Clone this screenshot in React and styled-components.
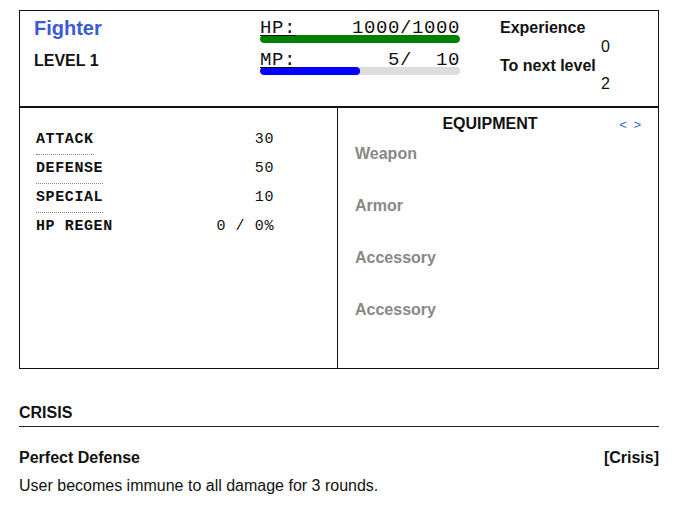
import React from 'react';
import styled, { createGlobalStyle } from 'styled-components';

const GlobalStyle = createGlobalStyle`
	body {
		margin: 0;
		font-family: "Liberation Sans", Arial, sans-serif;
		color: #111;
		background: #fff;
	}
`;

const Page = styled.div`
	width: 640px;
	padding: 10px 0 0 19px;
`;

const Card = styled.div`
	border: 1px solid #111;
`;

const Header = styled.header`
	display: grid;
	grid-template-columns: 240px 200px 150px;
	height: 95px;
	border-bottom: 2px solid #111;
`;

const NameBlock = styled.div`
	padding: 5px 0 0 14px;
`;

const Name = styled.div`
	color: #3a5bd1;
	font-size: 20px;
	font-weight: 700;
	line-height: 24px;
`;

const Level = styled.div`
	margin-top: 11px;
	font-size: 16px;
	font-weight: 700;
	line-height: 20px;
`;

const Gauges = styled.div`
	display: flex;
	flex-direction: column;
	gap: 10px;
	padding-top: 10px;
`;

const GaugeRow = styled.div`
	display: flex;
	justify-content: space-between;
	font-family: "Liberation Mono", "Courier New", monospace;
	font-size: 19px;
	letter-spacing: 0.6px;
	line-height: 14px;
	white-space: pre;
`;

const GaugeLabel = styled.span`
	text-decoration: underline;
	text-underline-offset: 2px;
`;

const Track = styled.div`
	height: 8px;
	border-radius: 4px;
	background: #dcdcdc;
	overflow: hidden;
`;

const Fill = styled.div`
	height: 100%;
	border-radius: 4px;
	background: ${(p) => p.$color};
`;

const ExpBlock = styled.div`
	padding: 7px 0 0 40px;
	font-size: 16px;
	line-height: 19px;
`;

const ExpLabel = styled.div`
	font-weight: 700;
	white-space: nowrap;
`;

const ExpValue = styled.div`
	text-align: right;
	margin-top: ${(p) => p.$pull || 0}px;
`;

const Body = styled.div`
	display: grid;
	grid-template-columns: 318px 1fr;
	height: 260px;
`;

const StatsPanel = styled.div`
	border-right: 1px solid #111;
	padding: 23px 0 0 16px;
`;

const StatRow = styled.div`
	display: flex;
	justify-content: space-between;
	align-items: flex-start;
	width: 238px;
	margin-bottom: 5px;
	font-family: "Liberation Mono", "Courier New", monospace;
	font-size: 15px;
	letter-spacing: 0.6px;
	line-height: 18px;
	white-space: pre;
`;

const StatLabel = styled.span`
	font-weight: 700;
	padding-bottom: 5px;
	border-bottom: 1px dotted ${(p) => (p.$last ? 'transparent' : '#888')};
`;

const EquipPanel = styled.div`
	padding: 6px 16px 0 17px;
`;

const EquipHead = styled.div`
	display: grid;
	grid-template-columns: 1fr auto 1fr;
	align-items: center;
	margin-left: -17px;
	margin-bottom: 10px;
`;

const EquipTitle = styled.div`
	grid-column: 2;
	font-size: 16px;
	font-weight: 700;
	line-height: 20px;
`;

const Nav = styled.div`
	justify-self: end;
	color: #3366e6;
	font-size: 13px;
	letter-spacing: 1px;
	word-spacing: 1px;
`;

const Slot = styled.div`
	color: #888;
	font-size: 16px;
	font-weight: 700;
	line-height: 20px;
	margin-bottom: 32px;
`;

const Crisis = styled.section`
	margin-top: 34px;
	font-size: 16px;
	line-height: 20px;
`;

const CrisisTitle = styled.h3`
	margin: 0;
	padding-bottom: 3px;
	font-size: 16px;
	font-weight: 700;
	border-bottom: 1px solid #222;
`;

const AbilityHead = styled.div`
	display: flex;
	justify-content: space-between;
	margin-top: 21px;
	font-weight: 700;
`;

const AbilityText = styled.div`
	margin-top: 8px;
`;

const stats = [
	{ label: 'ATTACK', value: '30' },
	{ label: 'DEFENSE', value: '50' },
	{ label: 'SPECIAL', value: '10' },
	{ label: 'HP REGEN', value: '0 / 0%' }
];

const slots = ['Weapon', 'Armor', 'Accessory', 'Accessory'];

export default function App() {
	const hp = { cur: 1000, max: 1000 };
	const mp = { cur: 5, max: 10 };
	return (
		<Page>
			<GlobalStyle />
			<Card>
				<Header>
					<NameBlock>
						<Name>Fighter</Name>
						<Level>LEVEL 1</Level>
					</NameBlock>
					<Gauges>
						<div>
							<GaugeRow>
								<GaugeLabel>HP:</GaugeLabel>
								<span>1000/1000</span>
							</GaugeRow>
							<Track>
								<Fill $color="#008000" style={{ width: `${(hp.cur / hp.max) * 100}%` }} />
							</Track>
						</div>
						<div>
							<GaugeRow>
								<GaugeLabel>MP:</GaugeLabel>
								<span>{'5/  10'}</span>
							</GaugeRow>
							<Track>
								<Fill $color="#0000ff" style={{ width: `${(mp.cur / mp.max) * 100}%` }} />
							</Track>
						</div>
					</Gauges>
					<ExpBlock>
						<ExpLabel>Experience</ExpLabel>
						<ExpValue>0</ExpValue>
						<ExpLabel>To next level</ExpLabel>
						<ExpValue $pull={-1}>2</ExpValue>
					</ExpBlock>
				</Header>
				<Body>
					<StatsPanel>
						{stats.map((s, i) => (
							<StatRow key={s.label}>
								<StatLabel $last={i === stats.length - 1}>{s.label}</StatLabel>
								<span>{s.value}</span>
							</StatRow>
						))}
					</StatsPanel>
					<EquipPanel>
						<EquipHead>
							<EquipTitle>EQUIPMENT</EquipTitle>
							<Nav>&lt; &gt;</Nav>
						</EquipHead>
						{slots.map((s, i) => (
							<Slot key={i}>{s}</Slot>
						))}
					</EquipPanel>
				</Body>
			</Card>
			<Crisis>
				<CrisisTitle>CRISIS</CrisisTitle>
				<AbilityHead>
					<span>Perfect Defense</span>
					<span>[Crisis]</span>
				</AbilityHead>
				<AbilityText>User becomes immune to all damage for 3 rounds.</AbilityText>
			</Crisis>
		</Page>
	);
}
